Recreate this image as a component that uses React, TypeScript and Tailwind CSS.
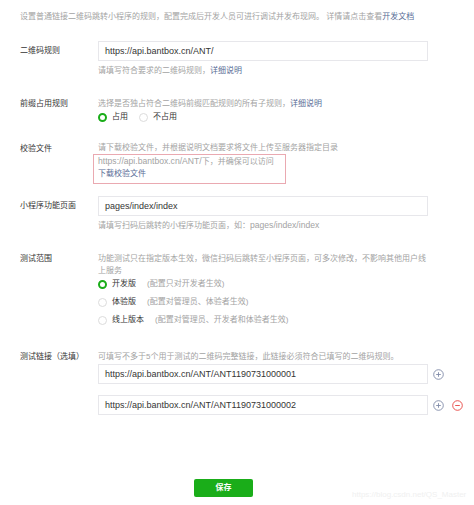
const hint = "text-[8px] leading-[12px] text-[#a3a3a3]";
const label = "w-[78px] shrink-0 text-[8px] leading-[12px] text-[#353535]";
const input =
  "w-[330px] h-[20px] border border-[#e7e7eb] bg-white px-[6px] text-[9px] leading-[18px] text-[#353535]";
const latin = "text-[8.6px]";

function Radio({ checked }: { checked?: boolean }) {
  return checked ? (
    <span className="w-[9px] h-[9px] rounded-full border-[2px] border-[#1aad19] bg-white shrink-0" />
  ) : (
    <span className="w-[9px] h-[9px] rounded-full border border-[#dcdcdc] bg-white shrink-0" />
  );
}

function CircleIcon({ minus }: { minus?: boolean }) {
  const c = minus ? "#e64340" : "#7f8aa8";
  return (
    <svg width="11" height="11" viewBox="0 0 11 11" className="shrink-0">
      <circle cx="5.5" cy="5.5" r="4.8" fill="none" stroke={c} strokeWidth="0.9" />
      <line x1="3.2" y1="5.5" x2="7.8" y2="5.5" stroke={c} strokeWidth="0.9" />
      {!minus && <line x1="5.5" y1="3.2" x2="5.5" y2="7.8" stroke={c} strokeWidth="0.9" />}
    </svg>
  );
}

export default function App() {
  return (
    <div className="relative w-[474px] h-[505px] overflow-hidden bg-white font-['Liberation_Sans','Noto_Sans_CJK_SC',sans-serif]">
      <p className={`pl-[20px] pt-[11px] ${hint}`}>
        设置普通链接二维码跳转小程序的规则，配置完成后开发人员可进行调试并发布现网。 详情请点击查看
        <span className="text-[#576b95]">开发文档</span>
      </p>

      {/* 二维码规则 */}
      <div className="flex pl-[20px] mt-[18px]">
        <div className={`${label} pt-[4px]`}>二维码规则</div>
        <div>
          <div className={input}>https://api.bantbox.cn/ANT/</div>
          <p className={`${hint} mt-[4px]`}>
            请填写符合要求的二维码规则，<span className="text-[#576b95]">详细说明</span>
          </p>
        </div>
      </div>

      {/* 前缀占用规则 */}
      <div className="flex pl-[20px] mt-[21px]">
        <div className={label}>前缀占用规则</div>
        <div>
          <p className={hint}>
            选择是否独占符合二维码前缀匹配规则的所有子规则，<span className="text-[#576b95]">详细说明</span>
          </p>
          <div className="flex items-center h-[14px] text-[8px] text-[#353535]">
            <Radio checked />
            <span className="ml-[5px]">占用</span>
            <span className="ml-[11px] flex items-center">
              <Radio />
            </span>
            <span className="ml-[5px]">不占用</span>
          </div>
        </div>
      </div>

      {/* 校验文件 */}
      <div className="flex pl-[20px] mt-[18px]">
        <div className={`${label} pt-[1px]`}>校验文件</div>
        <div>
          <p className={hint}>请下载校验文件，并根据说明文档要求将文件上传至服务器指定目录</p>
          <div className="-ml-[5px] w-[193px] border border-[#eaa9b1] pl-[4px] pb-[3px]">
            <p className={`${hint} text-[#9a9a9a]`}>
              <span className={latin}>https://api.bantbox.cn/ANT/</span>下，并确保可以访问
            </p>
            <p className="text-[8px] leading-[12px] text-[#576b95]">下载校验文件</p>
          </div>
        </div>
      </div>

      {/* 小程序功能页面 */}
      <div className="flex pl-[20px] mt-[12px]">
        <div className={`${label} pt-[4px]`}>小程序功能页面</div>
        <div>
          <div className={input}>pages/index/index</div>
          <p className={`${hint} mt-[3px]`}>
            请填写扫码后跳转的小程序功能页面，如：<span className={latin}>pages/index/index</span>
          </p>
        </div>
      </div>

      {/* 测试范围 */}
      <div className="flex pl-[20px] mt-[21px]">
        <div className={label}>测试范围</div>
        <div className="w-[330px]">
          <p className={hint}>
            功能测试只在指定版本生效，微信扫码后跳转至小程序页面，可多次修改，不影响其他用户线
            <br />
            上服务
          </p>
          <div className="flex flex-col gap-[4px] text-[8px] leading-[14px]">
            <div className="flex items-center h-[14px]">
              <Radio checked />
              <span className="ml-[5px] text-[#353535]">开发版</span>
              <span className="ml-[11px] text-[#a3a3a3]">(配置只对开发者生效)</span>
            </div>
            <div className="flex items-center h-[14px]">
              <Radio />
              <span className="ml-[5px] text-[#353535]">体验版</span>
              <span className="ml-[11px] text-[#a3a3a3]">(配置对管理员、体验者生效)</span>
            </div>
            <div className="flex items-center h-[14px]">
              <Radio />
              <span className="ml-[5px] text-[#353535]">线上版本</span>
              <span className="ml-[11px] text-[#a3a3a3]">(配置对管理员、开发者和体验者生效)</span>
            </div>
          </div>
        </div>
      </div>

      {/* 测试链接 */}
      <div className="flex pl-[20px] mt-[24px]">
        <div className={label}>测试链接（选填）</div>
        <div>
          <p className={hint}>可填写不多于5个用于测试的二维码完整链接，此链接必须符合已填写的二维码规则。</p>
          <div className="flex items-center mt-[1px]">
            <div className={input}>https://api.bantbox.cn/ANT/ANT1190731000001</div>
            <span className="ml-[5px] flex">
              <CircleIcon />
            </span>
          </div>
          <div className="flex items-center mt-[11px]">
            <div className={input}>https://api.bantbox.cn/ANT/ANT1190731000002</div>
            <span className="ml-[5px] flex gap-[8px]">
              <CircleIcon />
              <CircleIcon minus />
            </span>
          </div>
        </div>
      </div>

      <button className="ml-[194px] mt-[64px] w-[59px] h-[18px] rounded-[2px] bg-[#1aad19] text-white text-[8px] font-bold leading-[18px]">
        保存
      </button>

      <span className="absolute left-[352px] top-[490px] text-[8px] leading-[10px] text-[#f0f0f0]">
        https://blog.csdn.net/QS_Master
      </span>
    </div>
  );
}
